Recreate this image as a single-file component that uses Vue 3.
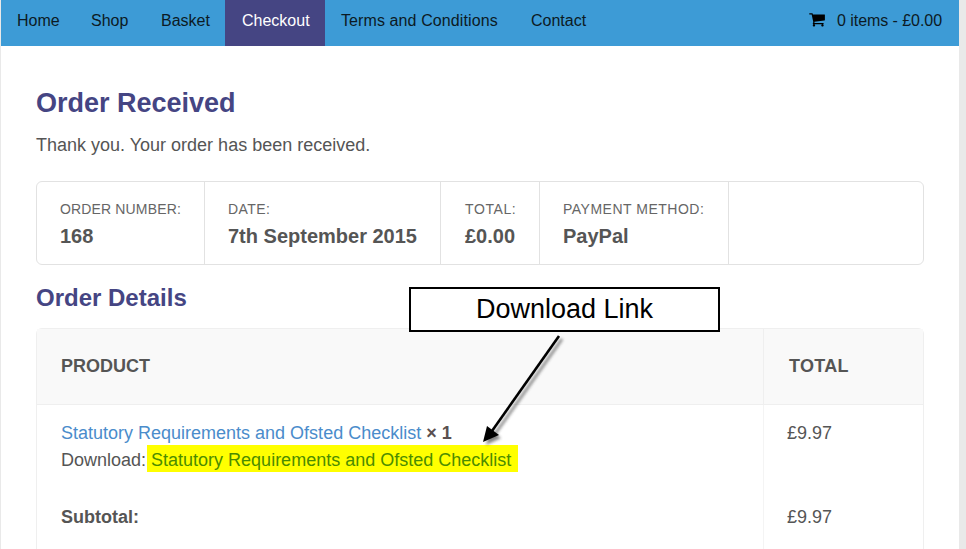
<script setup>
const links = [
  { text: 'Home', w: 74, pad: 16, ls: 0 },
  { text: 'Shop', w: 70, pad: 16, ls: 0 },
  { text: 'Basket', w: 80, pad: 16, ls: 0 },
  { text: 'Checkout', w: 100, pad: 17, ls: 0 },
  { text: 'Terms and Conditions', w: 190, pad: 16, ls: 0.1 },
  { text: 'Contact', w: 90, pad: 16, ls: 0 },
]
const overview = [
  { label: 'Order Number:', value: '168', w: 168, pad: 23, ls: 0.15 },
  { label: 'Date:', value: '7th September 2015', w: 236, pad: 23, ls: 0.4 },
  { label: 'Total:', value: '£0.00', w: 99, pad: 24, ls: 0.6 },
  { label: 'Payment Method:', value: 'PayPal', w: 189, pad: 23, ls: 0.5 },
]
</script>

<template>
  <div class="page">
    <nav class="nav">
      <a
        v-for="l in links"
        :key="l.text"
        class="nav-link"
        :class="{ active: l.text === 'Checkout' }"
        :style="{ width: l.w + 'px', paddingLeft: l.pad + 'px', letterSpacing: l.ls + 'px' }"
      >{{ l.text }}</a>
      <a class="cart">
        <svg class="cart-icon" viewBox="0 0 1664 1792" width="16" height="17"><path fill="#000" d="M640 1408q0 52-38 90t-90 38-90-38-38-90 38-90 90-38 90 38 38 90zm896 0q0 52-38 90t-90 38-90-38-38-90 38-90 90-38 90 38 38 90zm128-1088v512q0 24-16.5 42.5t-40.5 21.5l-1044 122q13 60 13 70 0 16-24 64h920q26 0 45 19t19 45-19 45-45 19h-1024q-26 0-45-19t-19-45q0-11 8-31.5t16-36 21.5-40 15.5-29.5l-177-823h-204q-26 0-45-19t-19-45 19-45 45-19h256q16 0 28.5 6.5t19.5 15.5 13 24.5 8 26 5.5 29.5 4.5 26h1201q26 0 45 19t19 45z"/></svg>
        <span class="cart-text">0 items - £0.00</span>
      </a>
    </nav>

    <main class="main">
      <h1 class="title">Order Received</h1>
      <p class="thanks">Thank you. Your order has been received.</p>

      <ul class="overview">
        <li
          v-for="o in overview"
          :key="o.label"
          class="ov-cell"
          :style="{ width: o.w + 'px', paddingLeft: o.pad + 'px' }"
        >
          <span class="ov-label" :style="{ letterSpacing: o.ls + 'px' }">{{ o.label }}</span>
          <strong class="ov-value">{{ o.value }}</strong>
        </li>
        <li class="ov-fill"></li>
      </ul>

      <h2 class="subtitle">Order Details</h2>

      <div class="table">
        <div class="th c1">Product</div>
        <div class="th c2 total-head">Total</div>
        <div class="td c1 item">
          <div><a class="link">Statutory Requirements and Ofsted Checklist</a> <strong class="qty">× 1</strong></div>
          <div>Download: <a class="dl">Statutory Requirements and Ofsted Checklist</a></div>
        </div>
        <div class="td c2 item">£9.97</div>
        <div class="td c1 sub"><strong>Subtotal:</strong></div>
        <div class="td c2 sub">£9.97</div>
      </div>
    </main>

    <div class="callout">Download Link</div>
    <svg class="arrow" width="100" height="125" viewBox="0 0 100 125">
      <defs>
        <filter id="sh" x="-30%" y="-30%" width="160%" height="160%">
          <feGaussianBlur stdDeviation="1.4" />
        </filter>
      </defs>
      <g filter="url(#sh)" opacity=".6" transform="translate(3 3)">
        <path d="M87 6 L20 101" stroke="#333" stroke-width="2.6" fill="none" />
        <path d="M11 112 L15 97 L26 105 Z" fill="#333" />
      </g>
      <path d="M87 6 L20 101" stroke="#000" stroke-width="2.6" fill="none" />
      <path d="M11 112 L15 96 L27 105 Z" fill="#000" />
    </svg>
  </div>
</template>

<style>
html, body { margin: 0; background: #e9e9e9; overflow: hidden; }
</style>

<style scoped>
.page {
  position: relative;
  width: 958px;
  height: 549px;
  margin-left: 1px;
  overflow: hidden;
  background: #fff;
  font-family: "Liberation Sans", Arial, sans-serif;
  font-size: 18px;
  color: #555;
}
.nav {
  display: flex;
  height: 46px;
  background: #3d9bd6;
  font-size: 16px;
  line-height: 41px;
  color: #0c1a24;
}
.nav-link {
  display: block;
  box-sizing: border-box;
  white-space: nowrap;
}
.nav-link.active {
  background: #454583;
  color: #fff;
}
.cart {
  display: flex;
  align-items: center;
  gap: 12px;
  margin-left: auto;
  padding-right: 17px;
  height: 41px;
}
.cart-icon { display: block; }
.cart-text { letter-spacing: -.06px; }
.main { padding: 41px 35px 0; }
.title {
  margin: 0;
  font-size: 27px;
  line-height: 32px;
  font-weight: 700;
  color: #454583;
}
.thanks {
  margin: 13px 0 0;
  line-height: 26px;
}
.overview {
  display: flex;
  list-style: none;
  margin: 23px 0 0;
  padding: 0;
  height: 82px;
  border: 1px solid #e2e2e2;
  border-radius: 6px;
}
.ov-cell {
  box-sizing: border-box;
  padding-top: 18px;
  border-right: 1px solid #e2e2e2;
}
.ov-fill { flex: 1; }
.ov-label {
  display: block;
  font-size: 14px;
  line-height: 18px;
  white-space: nowrap;
  text-transform: uppercase;
  color: #666;
}
.ov-value {
  display: block;
  margin-top: 5px;
  font-size: 20px;
  line-height: 27px;
}
.subtitle {
  margin: 18px 0 0;
  font-size: 24px;
  line-height: 30px;
  font-weight: 700;
  color: #454583;
}
.table {
  display: grid;
  grid-template-columns: 727px 1fr;
  margin-top: 15px;
  border: 1px solid #efefef;
  border-radius: 6px 6px 0 0;
}
.th {
  box-sizing: border-box;
  height: 76px;
  padding-top: 24px;
  font-size: 18px;
  line-height: 27px;
  font-weight: 700;
  text-transform: uppercase;
  background: #f9f9f9;
  border-bottom: 1px solid #efefef;
}
.c1 { border-right: 1px solid #efefef; padding-left: 24px; }
.c2 { padding-left: 23px; }
.total-head { padding-left: 25px; letter-spacing: .3px; }
.c1.sub, .c1.item { border-right-color: #f4f4f4; }
.item { padding-top: 15px; height: 84px; box-sizing: border-box; line-height: 27px; }
.sub { padding-top: 15px; line-height: 27px; height: 100px; }
.link { color: #4a8ccb; }
.qty { color: #5a5050; }
.dl {
  display: inline-block;
  width: 371px;
  box-sizing: border-box;
  padding: 4px 0 0 4px;
  margin: -4px 0 0 -4px;
  line-height: 23px;
  background: #ffff00;
  color: #4b8c00;
}
.callout {
  position: absolute;
  left: 408px;
  top: 287px;
  box-sizing: border-box;
  width: 311px;
  height: 45px;
  border: 2px solid #000;
  background: #fff;
  color: #000;
  font-size: 27px;
  line-height: 41px;
  text-align: center;
}
.arrow {
  position: absolute;
  left: 471px;
  top: 330px;
}
</style>
